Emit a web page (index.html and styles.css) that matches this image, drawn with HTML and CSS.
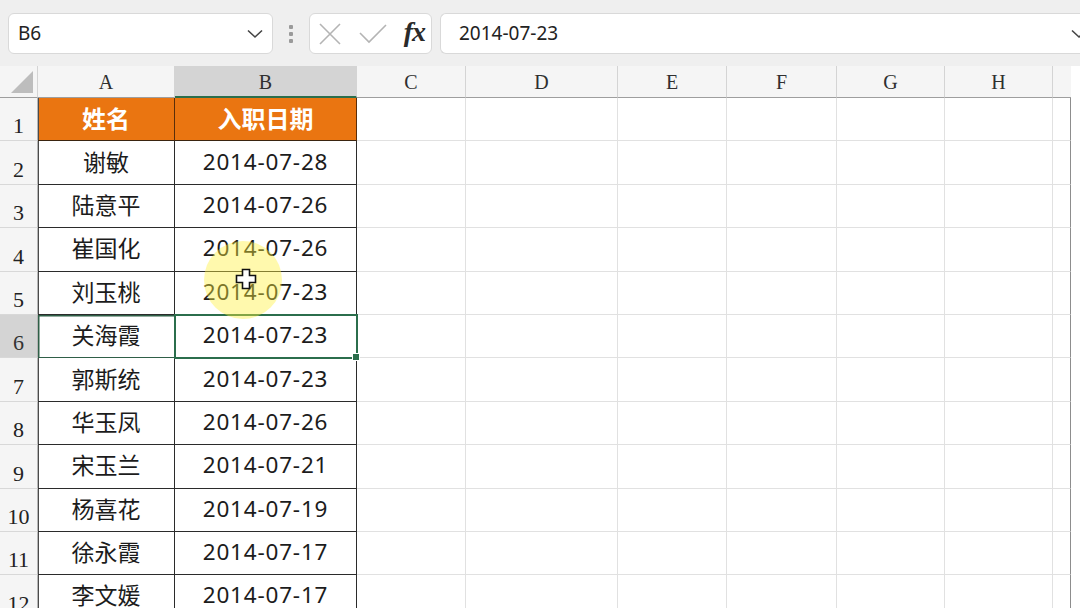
FILE: index.html
```html
<!DOCTYPE html>
<html lang="zh">
<head>
<meta charset="utf-8">
<title>Sheet</title>
<link rel="stylesheet" href="styles.css">
</head>
<body>
<div class="app">
  <div class="toolbar">
    <div class="namebox">
      <span class="nb-text">B6</span>
      <svg class="chev" width="18" height="10" viewBox="0 0 18 10"><path d="M2 1.5 L9 8 L16 1.5" fill="none" stroke="#444" stroke-width="1.6"/></svg>
    </div>
    <div class="dots"><i></i><i></i><i></i></div>
    <div class="funcbox">
      <svg class="ico" width="26" height="26" viewBox="0 0 26 26"><path d="M3 3 L23 23 M23 3 L3 23" stroke="#b4b4b4" stroke-width="1.6" fill="none"/></svg>
      <svg class="ico" width="30" height="26" viewBox="0 0 30 26"><path d="M2 12 L11 21 L28 4" stroke="#b4b4b4" stroke-width="1.6" fill="none"/></svg>
      <span class="fx">fx</span>
    </div>
    <div class="formula">
      <span class="f-text">2014-07-23</span>
      <svg class="chev2" width="18" height="10" viewBox="0 0 18 10"><path d="M2 1.5 L9 8 L16 1.5" fill="none" stroke="#444" stroke-width="1.6"/></svg>
    </div>
  </div>

  <div class="sheet">
    <div class="grid">
      <div class="corner"><span class="tri"></span></div>
      <div class="ch">A</div><div class="ch sel">B</div><div class="ch">C</div><div class="ch">D</div><div class="ch">E</div><div class="ch">F</div><div class="ch">G</div><div class="ch">H</div><div class="ch last"></div><div class="ch end"></div>

      <div class="rh">1</div><div class="c t hd ta">姓名</div><div class="c t hd">入职日期</div><div class="c"></div><div class="c"></div><div class="c"></div><div class="c"></div><div class="c"></div><div class="c"></div><div class="c edge"></div><div class="c out"></div>
      <div class="rh">2</div><div class="c t ta">谢敏</div><div class="c t d">2014-07-28</div><div class="c"></div><div class="c"></div><div class="c"></div><div class="c"></div><div class="c"></div><div class="c"></div><div class="c edge"></div><div class="c out"></div>
      <div class="rh">3</div><div class="c t ta">陆意平</div><div class="c t d">2014-07-26</div><div class="c"></div><div class="c"></div><div class="c"></div><div class="c"></div><div class="c"></div><div class="c"></div><div class="c edge"></div><div class="c out"></div>
      <div class="rh">4</div><div class="c t ta">崔国化</div><div class="c t d">2014-07-26</div><div class="c"></div><div class="c"></div><div class="c"></div><div class="c"></div><div class="c"></div><div class="c"></div><div class="c edge"></div><div class="c out"></div>
      <div class="rh">5</div><div class="c t ta">刘玉桃</div><div class="c t d">2014-07-23</div><div class="c"></div><div class="c"></div><div class="c"></div><div class="c"></div><div class="c"></div><div class="c"></div><div class="c edge"></div><div class="c out"></div>
      <div class="rh rsel">6</div><div class="c t ta arow">关海霞</div><div class="c t d active">2014-07-23</div><div class="c"></div><div class="c"></div><div class="c"></div><div class="c"></div><div class="c"></div><div class="c"></div><div class="c edge"></div><div class="c out"></div>
      <div class="rh">7</div><div class="c t ta">郭斯统</div><div class="c t d">2014-07-23</div><div class="c"></div><div class="c"></div><div class="c"></div><div class="c"></div><div class="c"></div><div class="c"></div><div class="c edge"></div><div class="c out"></div>
      <div class="rh">8</div><div class="c t ta">华玉凤</div><div class="c t d">2014-07-26</div><div class="c"></div><div class="c"></div><div class="c"></div><div class="c"></div><div class="c"></div><div class="c"></div><div class="c edge"></div><div class="c out"></div>
      <div class="rh">9</div><div class="c t ta">宋玉兰</div><div class="c t d">2014-07-21</div><div class="c"></div><div class="c"></div><div class="c"></div><div class="c"></div><div class="c"></div><div class="c"></div><div class="c edge"></div><div class="c out"></div>
      <div class="rh">10</div><div class="c t ta">杨喜花</div><div class="c t d">2014-07-19</div><div class="c"></div><div class="c"></div><div class="c"></div><div class="c"></div><div class="c"></div><div class="c"></div><div class="c edge"></div><div class="c out"></div>
      <div class="rh">11</div><div class="c t ta">徐永霞</div><div class="c t d">2014-07-17</div><div class="c"></div><div class="c"></div><div class="c"></div><div class="c"></div><div class="c"></div><div class="c"></div><div class="c edge"></div><div class="c out"></div>
      <div class="rh">12</div><div class="c t ta">李文媛</div><div class="c t d">2014-07-17</div><div class="c"></div><div class="c"></div><div class="c"></div><div class="c"></div><div class="c"></div><div class="c"></div><div class="c edge"></div><div class="c out"></div>
    </div>
    <div class="spot"></div>
    <svg class="cursor" width="22" height="22" viewBox="0 0 22 22">
      <path d="M7.5 1.5 H14.5 V7.5 H20.5 V14.5 H14.5 V20.5 H7.5 V14.5 H1.5 V7.5 H7.5 Z" fill="#fff" stroke="#111" stroke-width="1.6"/>
    </svg>
  </div>
</div>
</body>
</html>
```

FILE: styles.css
```css
* { box-sizing: border-box; }
html, body { margin: 0; padding: 0; }
body {
  width: 1080px;
  height: 608px;
  overflow: hidden;
  background: #ffffff;
  font-family: "Noto Sans", "Noto Sans CJK SC", sans-serif;
}
.app { width: 1080px; height: 608px; display: flex; flex-direction: column; }

.toolbar {
  height: 66px;
  flex: none;
  background: #efefef;
  display: flex;
  align-items: flex-start;
  padding-top: 13px;
  padding-left: 8px;
  overflow: hidden;
}
.namebox, .funcbox, .formula {
  flex: none;
  height: 41px;
  background: #fff;
  border: 1px solid #d9d9d9;
  border-radius: 6px;
  display: flex;
  align-items: center;
}
.namebox { width: 265px; padding: 0 8px 0 9px; justify-content: space-between; }
.nb-text, .f-text { font-size: 19px; color: #222; line-height: 1; }
.dots {
  flex: none;
  width: 36px;
  height: 41px;
  display: flex;
  flex-direction: column;
  align-items: center;
  justify-content: center;
  gap: 3px;
}
.dots i { width: 4px; height: 4px; background: #9a9a9a; border-radius: 1px; display: block; }
.funcbox { width: 123px; padding: 0 6px 0 7px; justify-content: space-between; }
.ico { display: block; }
.fx {
  font-family: "Liberation Serif", "DejaVu Serif", serif;
  font-style: italic;
  font-weight: bold;
  font-size: 28px;
  color: #2a2a2a;
  line-height: 1;
  margin-top: -4px;
  letter-spacing: -1px;
}
.formula {
  margin-left: 8px;
  width: 648px;
  padding: 0 0 0 18px;
  justify-content: space-between;
  border-right: none;
  border-radius: 6px 0 0 6px;
}
.chev2 { margin-right: 0; }

.sheet { position: relative; flex: 1; overflow: hidden; }
.grid {
  display: grid;
  grid-template-columns: 38px 137px 182px 109px 152px 109px 110px 108px 108px 18px 9px;
  grid-template-rows: 32px repeat(12, 43.4px);
}
.corner {
  background: #f5f5f5;
  border-right: 1px solid #d4d4d4;
  border-bottom: 1px solid #9e9e9e;
  position: relative;
}
.tri {
  position: absolute;
  right: 4px;
  bottom: 4px;
  width: 0; height: 0;
  border-left: 22px solid transparent;
  border-bottom: 22px solid #bdbdbd;
}
.ch {
  background: #f5f5f5;
  border-right: 1px solid #d4d4d4;
  border-bottom: 1px solid #9e9e9e;
  font-family: "Liberation Serif", "DejaVu Serif", serif;
  font-size: 20px;
  color: #2f2f2f;
  display: flex;
  align-items: center;
  justify-content: center;
  padding-top: 2px;
}
.ch.sel { background: #d4d4d4; border-bottom: 2px solid #2b6e4c; }
.ch.last { border-right: none; }
.ch.end { background: #fff; border: none; }
.rh {
  background: #f5f5f5;
  border-right: 1px solid #b5b5b5;
  border-bottom: 1px solid #d8d8d8;
  font-family: "Liberation Serif", "DejaVu Serif", serif;
  font-size: 22px;
  color: #222;
  display: flex;
  align-items: flex-end;
  justify-content: center;
  padding-bottom: 1px;
}
.rh.rsel { background: #d4d4d4; color: #333; }
.c {
  border-right: 1px solid #e1e1e1;
  border-bottom: 1px solid #e1e1e1;
  background: #fff;
}
.c.edge { border-right: 1.5px solid #8d8d8d; }
.c.out { border: none; }
.c.t {
  border-right: 1.5px solid #2b2b2b;
  border-bottom: 1.5px solid #2b2b2b;
  display: flex;
  align-items: center;
  justify-content: center;
  font-family: "Noto Sans CJK SC", sans-serif;
  font-size: 23px;
  color: #1c1c1c;
  padding-bottom: 4px;
}
.c.ta { box-shadow: inset 1px 0 0 #4a4a4a; }
.c.arow { box-shadow: inset 1.5px 0 0 #2f5f47, inset 0 1.5px 0 #2f5f47; border-bottom-color: #2f5f47; }
.c.d {
  font-family: "Noto Sans", sans-serif;
  font-size: 22.5px;
  letter-spacing: 0.8px;
  padding-bottom: 3px;
}
.c.hd {
  background: #ea7511;
  color: #fff;
  font-weight: bold;
  font-size: 24px;
  border-right-color: #5a2e0a;
  border-bottom-color: #3a2410;
}
.c.active {
  position: relative;
  outline: 2px solid #2b6e4c;
  outline-offset: -1px;
}
.c.active::after {
  content: "";
  position: absolute;
  right: -4px;
  bottom: -4px;
  width: 6px;
  height: 6px;
  background: #2b6e4c;
  border: 1px solid #fff;
}
.spot {
  position: absolute;
  left: 204px;
  top: 175px;
  width: 78px;
  height: 78px;
  border-radius: 50%;
  background: rgba(255, 240, 60, 0.42);
  pointer-events: none;
}
.cursor {
  position: absolute;
  left: 235px;
  top: 202px;
  pointer-events: none;
}
```
